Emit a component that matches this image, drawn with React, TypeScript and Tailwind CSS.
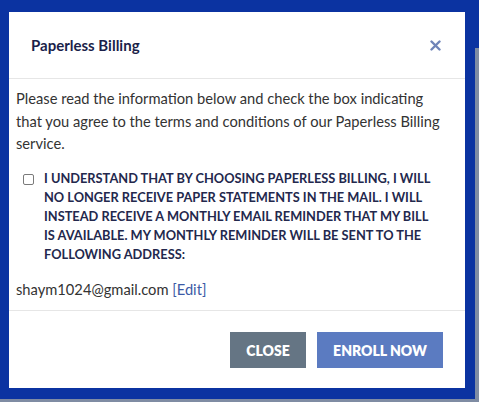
const App = () => {
  const notice =
    'I understand that by choosing paperless billing, I will no longer receive paper statements in the mail. I will instead receive a monthly email reminder that my bill is available. My monthly reminder will be sent to the following address:';

  return (
    <div className="w-[479px] h-[402px] bg-[#7f8ca3] flex flex-col font-['Lato',sans-serif] overflow-hidden">
      <div className="flex h-[399px]">
        <div className="w-[475px] h-full bg-[#0b33a1] pt-[12px] pl-[9px]">
          <div className="w-[456px] h-[376px] bg-white flex flex-col">
            {/* header */}
            <div className="h-[67px] flex items-center justify-between pl-[22px] pr-[24px] border-b border-[#e6e6e6]">
              <h2 className="text-[15px] font-bold text-[#1b1f4a]">Paperless Billing</h2>
              <button className="text-[#6f84b8]">
                <svg width="11" height="11" viewBox="0 0 11 11">
                  <path d="M1.5 1.5 L9.5 9.5 M9.5 1.5 L1.5 9.5" stroke="currentColor" strokeWidth="2.4" strokeLinecap="round" />
                </svg>
              </button>
            </div>

            {/* body */}
            <div className="flex-1 pl-[7px] pr-[10px] pt-[8px]">
              <p className="text-[14.7px] leading-[22.5px] text-[#333] pr-[9px]">
                Please read the information below and check the box indicating that you agree to the terms and conditions of our Paperless Billing service.
              </p>
              <div className="flex mt-[14px] pl-[7px]">
                <span className="mt-[5px] w-[11px] h-[11px] shrink-0 rounded-[2px] border border-[#7a7a7a] bg-white" />
                <p className="ml-[10px] text-[12.8px] leading-[19.2px] font-bold uppercase text-[#23284d] pr-[17px]">
                  {notice}
                </p>
              </div>
              <p className="mt-[13px] text-[14.7px] text-[#333]">
                shaym1024@gmail.com <a className="text-[#3c5aa6]">[Edit]</a>
              </p>
            </div>

            {/* footer */}
            <div className="h-[78px] border-t border-[#e6e6e6] flex items-start justify-end gap-[11px] pt-[21px] pr-[22px]">
              <button className="h-[36px] w-[76px] bg-[#657584] text-white text-[14px] font-extrabold">CLOSE</button>
              <button className="h-[36px] w-[126px] bg-[#5b7bc1] text-white text-[14px] font-extrabold">ENROLL NOW</button>
            </div>
          </div>
        </div>
        <div className="flex-1 flex flex-col">
          <div className="h-[48px] bg-[#0b33a1]" />
        </div>
      </div>
    </div>
  );
};

export default App;
